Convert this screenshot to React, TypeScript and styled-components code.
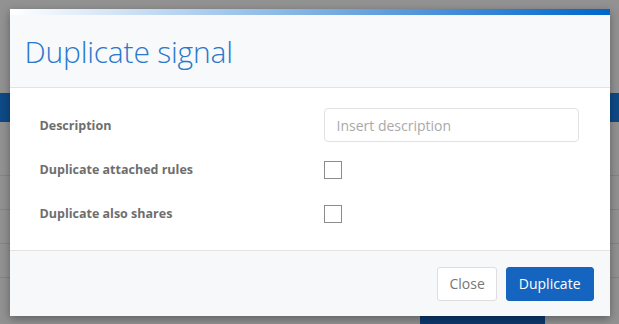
import React from 'react'
import styled, { createGlobalStyle } from 'styled-components'

const GlobalStyle = createGlobalStyle`
  html, body {
    margin: 0;
    padding: 0;
    width: 619px;
    height: 324px;
    overflow: hidden;
    font-family: 'Open Sans', 'Liberation Sans', sans-serif;
  }
`

const Page = styled.div`
  position: relative;
  width: 619px;
  height: 324px;
  background: #fff;
  overflow: hidden;
`

const Backdrop = styled.div`
  display: flex;
  flex-direction: column;
`

const TopBand = styled.div`
  margin-top: 93px;
  height: 29px;
  background: #1a82ea;
`

const RowLine = styled.div<{ $top: number }>`
  height: 33px;
  margin-top: ${(p) => p.$top}px;
  border-bottom: 1px solid #e6e6e6;
`

const BottomBar = styled.div`
  display: flex;
  align-items: flex-start;
  padding-left: 420px;
  margin-top: 38px;
  gap: 52px;
`

const DateButton = styled.div`
  width: 126px;
  height: 24px;
  background: #1565c0;
  color: #fff;
  font-size: 14px;
  text-align: center;
  padding-top: 4px;
`

const Ims = styled.span`
  font-size: 13px;
  color: #555;
  padding-top: 4px;
`

const Overlay = styled.div`
  position: absolute;
  inset: 0;
  background: rgba(0, 0, 0, 0.427);
  display: flex;
  justify-content: center;
  align-items: flex-start;
  padding-top: 9px;
`

const Modal = styled.div`
  width: 600px;
  background: #fff;
  box-shadow: 0 3px 9px rgba(0, 0, 0, 0.35);
  display: flex;
  flex-direction: column;
`

const AccentBar = styled.div`
  height: 6px;
  background: linear-gradient(90deg, #ffffff 0%, #7fb1e3 50%, #0066cc 100%);
`

const Header = styled.div`
  height: 72px;
  background: #f7f9fb;
  border-bottom: 1px solid #e3e3e3;
  display: flex;
  align-items: center;
  padding: 0 15px;
`

const Title = styled.h1`
  margin: 0;
  font-size: 30px;
  font-weight: 300;
  color: #2a78cc;
  letter-spacing: -0.2px;
`

const Body = styled.div`
  padding: 20px 30px 20px 30px;
  display: flex;
  flex-direction: column;
  gap: 11px;
`

const Row = styled.div`
  display: grid;
  grid-template-columns: 284px 1fr;
  align-items: center;
  min-height: 33px;
`

const Label = styled.label`
  font-size: 12.5px;
  font-weight: 700;
  color: #6e6e6e;
`

const Input = styled.input`
  box-sizing: border-box;
  width: 255px;
  height: 34px;
  border: 1px solid #e2e2e2;
  border-radius: 4px;
  padding: 0 12px;
  font-family: 'Open Sans', 'Liberation Sans', sans-serif;
  font-size: 14px;
  color: #444;
  outline: none;
  &::placeholder {
    color: #a9a9a9;
  }
`

const Check = styled.span`
  box-sizing: border-box;
  display: block;
  width: 18px;
  height: 18px;
  border: 1px solid #8c8c8c;
  background: #fff;
`

const Footer = styled.div`
  height: 65px;
  background: #f7f8fa;
  border-top: 1px solid #e3e3e3;
  display: flex;
  justify-content: flex-end;
  align-items: center;
  gap: 9px;
  padding: 0 16px 0 0;
`

const Button = styled.button<{ $primary?: boolean }>`
  box-sizing: border-box;
  height: 34px;
  padding: 0 ${(p) => (p.$primary ? '12px' : '11px')};
  border-radius: 3px;
  font-family: 'Open Sans', 'Liberation Sans', sans-serif;
  font-size: 14px;
  cursor: pointer;
  border: 1px solid ${(p) => (p.$primary ? '#1565c0' : '#dedede')};
  background: ${(p) => (p.$primary ? '#1565c0' : '#fff')};
  color: ${(p) => (p.$primary ? '#fff' : '#777')};
`

export default function App() {
  return (
    <>
      <GlobalStyle />
      <Page>
        <Backdrop>
          <TopBand />
          <RowLine $top={20} />
          <RowLine $top={0} />
          <RowLine $top={0} />
          <RowLine $top={0} />
          <BottomBar>
            <DateButton>Date</DateButton>
            <Ims>Ims</Ims>
          </BottomBar>
        </Backdrop>
        <Overlay>
          <Modal>
            <AccentBar />
            <Header>
              <Title>Duplicate signal</Title>
            </Header>
            <Body>
              <Row>
                <Label>Description</Label>
                <Input placeholder="Insert description" />
              </Row>
              <Row>
                <Label>Duplicate attached rules</Label>
                <Check />
              </Row>
              <Row>
                <Label>Duplicate also shares</Label>
                <Check />
              </Row>
            </Body>
            <Footer>
              <Button>Close</Button>
              <Button $primary>Duplicate</Button>
            </Footer>
          </Modal>
        </Overlay>
      </Page>
    </>
  )
}
